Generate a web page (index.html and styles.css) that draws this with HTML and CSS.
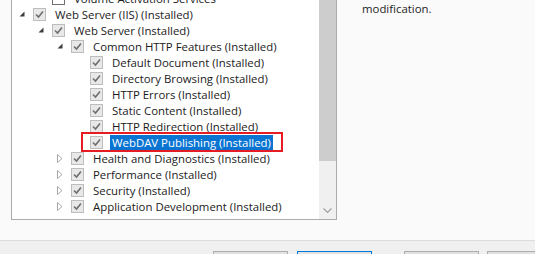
FILE: index.html
```html
<!DOCTYPE html>
<html>
<head>
<meta charset="utf-8">
<link rel="stylesheet" href="styles.css">
</head>
<body>
<div class="window">
  <div class="main">
    <div class="tree">
      <div class="tree-view">
        <div class="nodes">
          <div class="row lvl1"><span class="exp"></span><span class="cb off"></span><span class="label">Volume Activation Services</span></div>
          <div class="row lvl0"><span class="exp"><svg width="6" height="6" viewBox="0 0 6 6"><polygon points="5.5,0.5 5.5,5.5 0.5,5.5" fill="#3c3c3c"/></svg></span><span class="cb"><svg width="11" height="11" viewBox="0 0 11 11"><polyline points="2,5.5 4.5,8 9,2.5" fill="none" stroke="#6e6e6e" stroke-width="1.6"/></svg></span><span class="label">Web Server (IIS) (Installed)</span></div>
          <div class="row lvl1"><span class="exp"><svg width="6" height="6" viewBox="0 0 6 6"><polygon points="5.5,0.5 5.5,5.5 0.5,5.5" fill="#3c3c3c"/></svg></span><span class="cb"><svg width="11" height="11" viewBox="0 0 11 11"><polyline points="2,5.5 4.5,8 9,2.5" fill="none" stroke="#6e6e6e" stroke-width="1.6"/></svg></span><span class="label">Web Server (Installed)</span></div>
          <div class="row lvl2"><span class="exp"><svg width="6" height="6" viewBox="0 0 6 6"><polygon points="5.5,0.5 5.5,5.5 0.5,5.5" fill="#3c3c3c"/></svg></span><span class="cb"><svg width="11" height="11" viewBox="0 0 11 11"><polyline points="2,5.5 4.5,8 9,2.5" fill="none" stroke="#6e6e6e" stroke-width="1.6"/></svg></span><span class="label">Common HTTP Features (Installed)</span></div>
          <div class="row lvl3"><span class="exp"></span><span class="cb"><svg width="11" height="11" viewBox="0 0 11 11"><polyline points="2,5.5 4.5,8 9,2.5" fill="none" stroke="#6e6e6e" stroke-width="1.6"/></svg></span><span class="label">Default Document (Installed)</span></div>
          <div class="row lvl3"><span class="exp"></span><span class="cb"><svg width="11" height="11" viewBox="0 0 11 11"><polyline points="2,5.5 4.5,8 9,2.5" fill="none" stroke="#6e6e6e" stroke-width="1.6"/></svg></span><span class="label">Directory Browsing (Installed)</span></div>
          <div class="row lvl3"><span class="exp"></span><span class="cb"><svg width="11" height="11" viewBox="0 0 11 11"><polyline points="2,5.5 4.5,8 9,2.5" fill="none" stroke="#6e6e6e" stroke-width="1.6"/></svg></span><span class="label">HTTP Errors (Installed)</span></div>
          <div class="row lvl3"><span class="exp"></span><span class="cb"><svg width="11" height="11" viewBox="0 0 11 11"><polyline points="2,5.5 4.5,8 9,2.5" fill="none" stroke="#6e6e6e" stroke-width="1.6"/></svg></span><span class="label">Static Content (Installed)</span></div>
          <div class="row lvl3"><span class="exp"></span><span class="cb"><svg width="11" height="11" viewBox="0 0 11 11"><polyline points="2,5.5 4.5,8 9,2.5" fill="none" stroke="#6e6e6e" stroke-width="1.6"/></svg></span><span class="label">HTTP Redirection (Installed)</span></div>
          <div class="row lvl3 marked"><span class="exp"></span><span class="cb"><svg width="11" height="11" viewBox="0 0 11 11"><polyline points="2,5.5 4.5,8 9,2.5" fill="none" stroke="#6e6e6e" stroke-width="1.6"/></svg></span><span class="label selected">WebDAV Publishing (Installed)</span><span class="callout"></span></div>
          <div class="row lvl2"><span class="exp"><svg width="6" height="9" viewBox="0 0 6 9"><polygon points="0.5,0.5 5,4.5 0.5,8.5" fill="none" stroke="#a8a8a8" stroke-width="1"/></svg></span><span class="cb"><svg width="11" height="11" viewBox="0 0 11 11"><polyline points="2,5.5 4.5,8 9,2.5" fill="none" stroke="#6e6e6e" stroke-width="1.6"/></svg></span><span class="label">Health and Diagnostics (Installed)</span></div>
          <div class="row lvl2"><span class="exp"><svg width="6" height="9" viewBox="0 0 6 9"><polygon points="0.5,0.5 5,4.5 0.5,8.5" fill="none" stroke="#a8a8a8" stroke-width="1"/></svg></span><span class="cb"><svg width="11" height="11" viewBox="0 0 11 11"><polyline points="2,5.5 4.5,8 9,2.5" fill="none" stroke="#6e6e6e" stroke-width="1.6"/></svg></span><span class="label">Performance (Installed)</span></div>
          <div class="row lvl2"><span class="exp"><svg width="6" height="9" viewBox="0 0 6 9"><polygon points="0.5,0.5 5,4.5 0.5,8.5" fill="none" stroke="#a8a8a8" stroke-width="1"/></svg></span><span class="cb"><svg width="11" height="11" viewBox="0 0 11 11"><polyline points="2,5.5 4.5,8 9,2.5" fill="none" stroke="#6e6e6e" stroke-width="1.6"/></svg></span><span class="label">Security (Installed)</span></div>
          <div class="row lvl2"><span class="exp"><svg width="6" height="9" viewBox="0 0 6 9"><polygon points="0.5,0.5 5,4.5 0.5,8.5" fill="none" stroke="#a8a8a8" stroke-width="1"/></svg></span><span class="cb"><svg width="11" height="11" viewBox="0 0 11 11"><polyline points="2,5.5 4.5,8 9,2.5" fill="none" stroke="#6e6e6e" stroke-width="1.6"/></svg></span><span class="label">Application Development (Installed)</span></div>
        </div>
      </div>
      <div class="scrollbar">
        <div class="thumb"></div>
        <div class="track">
          <svg class="arrow" width="9" height="6" viewBox="0 0 9 6"><polyline points="0.5,0.5 4.5,4.5 8.5,0.5" fill="none" stroke="#a0a0a0" stroke-width="1.2"/></svg>
        </div>
      </div>
    </div>
    <div class="desc">
      <p>firewalls without<br>modification.</p>
    </div>
  </div>
  <div class="footer">
    <button class="btn">&lt; Previous</button>
    <button class="btn default">Next &gt;</button>
    <button class="btn wide">Install</button>
    <button class="btn">Cancel</button>
  </div>
</div>
</body>
</html>
```

FILE: styles.css
```css
html, body {
  margin: 0;
  padding: 0;
}
body {
  width: 535px;
  height: 254px;
  overflow: hidden;
  background: #fafafa;
  font-family: "Open Sans", "Noto Sans", sans-serif;
  font-size: 11.4px;
  color: #1b1b1b;
}
.window {
  display: flex;
  flex-direction: column;
  height: 254px;
}
.main {
  display: flex;
  height: 240px;
  flex: none;
}
.tree {
  margin-left: 11px;
  width: 324px;
  height: 219px;
  border: 1px solid #acacac;
  border-top: none;
  background: #fff;
  display: flex;
  overflow: hidden;
  flex: none;
}
.tree-view {
  flex: 1;
  overflow: hidden;
}
.nodes {
  margin-top: -10px;
}
.row {
  position: relative;
  display: flex;
  align-items: center;
  height: 16px;
  white-space: nowrap;
}
.lvl0 { padding-left: 4px; }
.lvl1 { padding-left: 23px; }
.lvl2 { padding-left: 42px; }
.lvl3 { padding-left: 61px; }
.exp {
  width: 11px;
  height: 16px;
  display: flex;
  align-items: center;
  justify-content: center;
  flex: none;
}
.cb {
  margin-left: 6px;
  width: 11px;
  height: 11px;
  border: 1px solid #bdbdbd;
  background: #e8e8e8;
  flex: none;
  display: flex;
}
.cb.off {
  background: #fff;
  border-color: #707070;
}
.label {
  margin-left: 7px;
  padding: 0 2px;
  line-height: 15px;
}
.selected {
  background: #0a74d2;
  color: #fff;
}
.callout {
  position: absolute;
  left: 69px;
  top: -2px;
  width: 198px;
  height: 16px;
  border: 2px solid #e51c23;
}
.scrollbar {
  width: 17px;
  flex: none;
  display: flex;
  flex-direction: column;
  background: #f0f0f0;
}
.thumb {
  height: 161px;
  background: #cdcdcd;
  flex: none;
}
.track {
  flex: 1;
  display: flex;
  align-items: flex-end;
  justify-content: center;
  padding-bottom: 5px;
}
.desc {
  padding-left: 25px;
  flex: 1;
  overflow: hidden;
}
.desc p {
  margin: -15px 0 0;
  line-height: 16px;
  white-space: nowrap;
  color: #1e1e1e;
}
.footer {
  flex: 1;
  border-top: 1px solid #dcdcdc;
  background: #f0f0f0;
  display: flex;
  padding-left: 213px;
  padding-top: 10px;
  gap: 9px;
}
.btn {
  width: 75px;
  height: 23px;
  flex: none;
  border: 1px solid #adadad;
  background: #e1e1e1;
  font: inherit;
  padding: 0;
}
.btn.default {
  border-color: #0078d7;
}
.btn.wide {
  margin-left: 23px;
  margin-right: -1px;
}
```
